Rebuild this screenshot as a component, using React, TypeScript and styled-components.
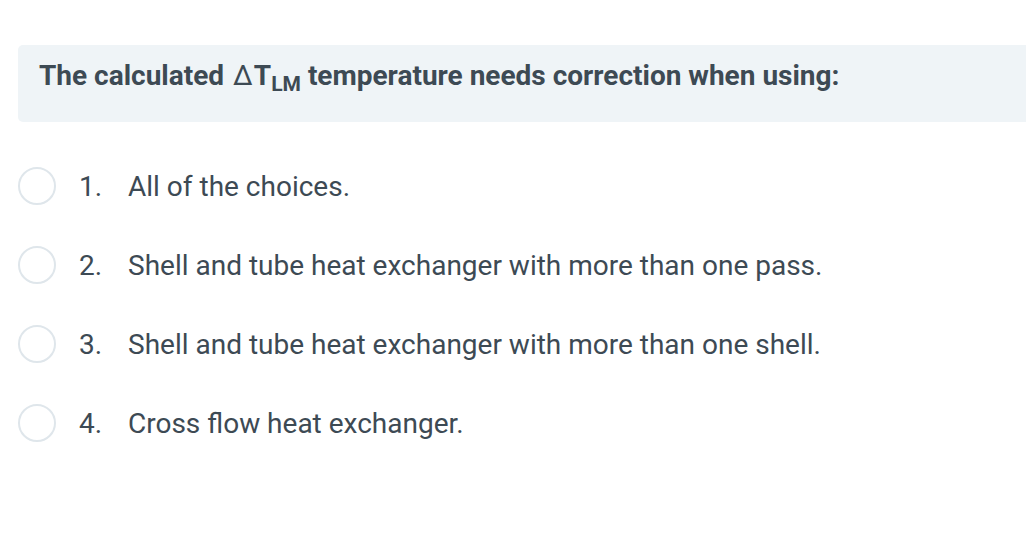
import React from "react";
import styled, { createGlobalStyle } from "styled-components";

const Global = createGlobalStyle`
  html, body { margin: 0; padding: 0; background: #ffffff; }
  body { font-family: Roboto, "Liberation Sans", sans-serif; overflow: hidden; }
`;

const Page = styled.div`
  width: 1026px;
  height: 552px;
  padding: 45px 0 0 18px;
  box-sizing: border-box;
  overflow: hidden;
`;

const Question = styled.div`
  width: 1040px;
  height: 77px;
  box-sizing: border-box;
  background: #eff4f7;
  border-radius: 5px;
  padding: 17px 21px 0;
  color: #3d4a54;
  font-size: 28px;
  font-weight: 700;
  white-space: nowrap;
`;

const QuestionText = styled.p`
  margin: 0;
  line-height: 1;
`;

const Delta = styled.span`
  font-weight: 400;
  margin: 0 1px 0 2px;
`;

const Sub = styled.sub`
  font-size: 0.75em;
  vertical-align: -0.28em;
  line-height: 0;
`;

const Options = styled.ul`
  list-style: none;
  margin: 45px 0 0 0;
  padding: 0;
  display: flex;
  flex-direction: column;
  gap: 41px;
`;

const Option = styled.li`
  display: flex;
  align-items: center;
  height: 38px;
  color: #3d4a54;
  font-size: 28px;
`;

const Radio = styled.span`
  width: 38px;
  height: 38px;
  box-sizing: border-box;
  border: 2px solid #dfe6eb;
  border-radius: 50%;
  flex: none;
`;

const Num = styled.span`
  width: 49px;
  margin-left: 23px;
  flex: none;
`;

const Label = styled.span``;

const choices = [
  "All of the choices.",
  "Shell and tube heat exchanger with more than one pass.",
  "Shell and tube heat exchanger with more than one shell.",
  "Cross flow heat exchanger.",
];

export default function App() {
  return (
    <>
      <Global />
      <Page>
        <Question>
          <QuestionText>
            The calculated <Delta>∆</Delta>T<Sub>LM</Sub> temperature needs correction when using:
          </QuestionText>
        </Question>
        <Options>
          {choices.map((c, i) => (
            <Option key={i}>
              <Radio />
              <Num>{i + 1}.</Num>
              <Label>{c}</Label>
            </Option>
          ))}
        </Options>
      </Page>
    </>
  );
}
